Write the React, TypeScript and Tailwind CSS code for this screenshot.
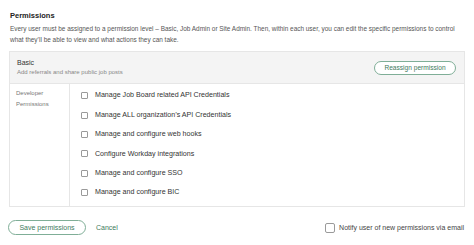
import React from "react";

const items = [
  "Manage Job Board related API Credentials",
  "Manage ALL organization\u2019s API Credentials",
  "Manage and configure web hooks",
  "Configure Workday integrations",
  "Manage and configure SSO",
  "Manage and configure BIC",
];

export default function App() {
  return (
    <div
      className="w-[474px] h-[245px] bg-white px-[9px] pt-[11px] text-[#333]"
      style={{ fontFamily: '"Liberation Sans", Arial, sans-serif' }}
    >
      <div className="text-[7.5px] leading-[10px] font-bold text-[#222] pl-[1px]">Permissions</div>
      <div className="mt-[3px] text-[6.45px] leading-[10.5px] text-[#555] pl-[1px]">
        <span className="block whitespace-nowrap">
          Every user must be assigned to a permission level – Basic, Job Admin or Site Admin. Then, within each user, you can edit the specific permissions to control
        </span>
        <span className="block whitespace-nowrap">what they’ll be able to view and what actions they can take.</span>
      </div>

      <div className="mt-[6px] border border-[#e6e6e6]">
        <div className="flex items-center justify-between bg-[#f4f4f4] border-b border-[#e6e6e6] pl-[7px] pr-[8px] pt-[6px] pb-[6px]">
          <div>
            <div className="text-[7px] leading-[9px] text-[#333]">Basic</div>
            <div className="text-[6px] leading-[9px] text-[#888] mt-[1px]">Add referrals and share public job posts</div>
          </div>
          <button className="w-[82px] h-[14px] rounded-full border border-[#7fae97] bg-white text-[6.6px] text-[#3e7a5d] flex items-center justify-center">
            Reassign permission
          </button>
        </div>
        <div className="flex">
          <div className="w-[60px] border-r border-[#e6e6e6] pl-[6px] pt-[4px] text-[6px] leading-[11px] text-[#777]">
            Developer
            <br />
            Permissions
          </div>
          <div className="flex-1 pl-[11px] pt-[2px] pb-[4px]">
            {items.map((t) => (
              <div key={t} className="h-[19.4px] flex items-center gap-[7px]">
                <span className="w-[7px] h-[7px] border border-[#9a9a9a] rounded-[1px] bg-white" />
                <span className="text-[7.1px] text-[#333] whitespace-nowrap">{t}</span>
              </div>
            ))}
          </div>
        </div>
      </div>

      <div className="mt-[13px] flex items-center justify-between pr-[1px]">
        <div className="flex items-center gap-[10px] -ml-[1px]">
          <button className="w-[78px] h-[15px] rounded-full border border-[#7fae97] bg-white text-[7px] text-[#3e7a5d] flex items-center justify-center">
            Save permissions
          </button>
          <span className="text-[7px] text-[#3e7a5d]">Cancel</span>
        </div>
        <div className="flex items-center gap-[4px]">
          <span className="w-[10px] h-[10px] border border-[#9a9a9a] rounded-[2px] bg-white" />
          <span className="text-[7px] text-[#444] whitespace-nowrap">Notify user of new permissions via email</span>
        </div>
      </div>
    </div>
  );
}
